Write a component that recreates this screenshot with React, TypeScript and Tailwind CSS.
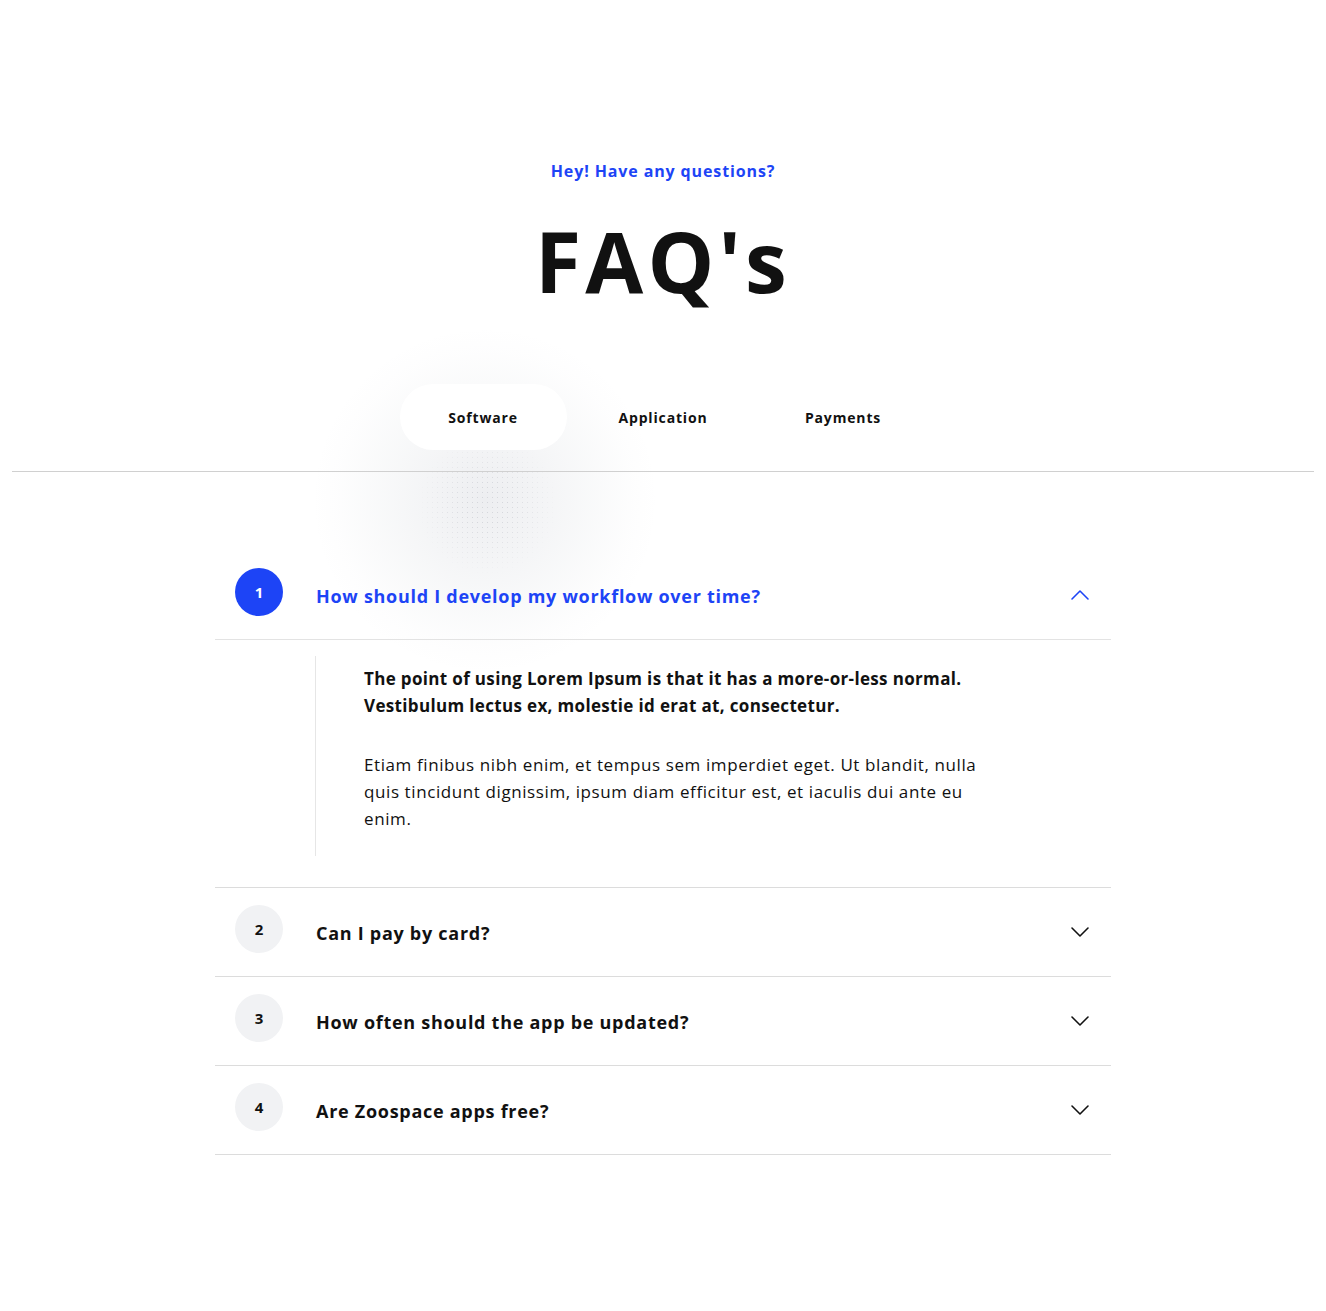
import { useState } from 'react';

type Faq = { q: string };

const TABS = ['Software', 'Application', 'Payments'];

const FAQS: Faq[] = [
  { q: 'How should I develop my workflow over time?' },
  { q: 'Can I pay by card?' },
  { q: 'How often should the app be updated?' },
  { q: 'Are Zoospace apps free?' },
];

function Chevron({ up }: { up: boolean }) {
  return (
    <svg width="20" height="12" viewBox="0 0 20 12" fill="none" className="mt-[6px] shrink-0">
      <path
        d={up ? 'M2 10 L10 2 L18 10' : 'M2 2 L10 10 L18 2'}
        stroke="currentColor"
        strokeWidth="1.6"
        strokeLinecap="round"
        strokeLinejoin="round"
      />
    </svg>
  );
}

export default function App() {
  const [tab, setTab] = useState('Software');
  const [open, setOpen] = useState<number | null>(0);

  return (
    <div className="relative min-h-[1311px] overflow-hidden bg-white px-3 font-['Open_Sans',sans-serif] text-[#111]">
      {/* soft glow behind the tabs */}
      <div className="pointer-events-none absolute left-[315px] top-[330px] h-[340px] w-[340px] rounded-full bg-[radial-gradient(circle,rgba(236,237,240,0.95)_0,rgba(240,241,243,0.8)_22%,rgba(245,246,247,0.6)_45%,rgba(250,250,251,0.3)_62%,transparent_72%)]" />
      <div className="pointer-events-none absolute left-[415px] top-[435px] h-[140px] w-[145px] rounded-full bg-[radial-gradient(#d5d7dc_0.7px,transparent_1px)] bg-[length:5px_5px] [mask-image:radial-gradient(circle,black_20%,transparent_70%)]" />

      <div className="relative flex flex-col items-center pt-[159px]">
        <p className="text-[16px] font-bold tracking-[0.055em] text-[#1d44f6]">Hey! Have any questions?</p>
        <h1 className="mt-[36px] text-[84px] font-bold leading-none tracking-[0.05em] text-[#111]">FAQ's</h1>

        <div className="mt-[81px] flex gap-[13px]">
          {TABS.map((t) => (
            <button
              key={t}
              type="button"
              onClick={() => setTab(t)}
              className={`h-[66px] w-[167px] rounded-[33px] text-[14px] font-bold tracking-[0.06em] text-[#111] ${
                tab === t ? 'bg-white' : 'bg-transparent'
              }`}
            >
              {t}
            </button>
          ))}
        </div>
      </div>

      <div className="relative mt-[21px] border-t border-[#d0d0d0]" />

      <div className="relative mx-auto mt-[79px] w-[896px]">
        {FAQS.map((f, i) => {
          const isOpen = open === i;
          return (
            <div key={f.q} className="border-b border-[#dcdcdc]">
              <button
                type="button"
                onClick={() => setOpen(isOpen ? null : i)}
                className={`flex w-full items-center pb-[23px] pl-5 pr-[21px] pt-[17px] text-left ${
                  isOpen ? 'border-b border-[#e3e3e3] text-[#1d44f6]' : 'text-[#111]'
                }`}
              >
                <span
                  className={`flex h-12 w-12 shrink-0 items-center justify-center rounded-full text-[15px] font-bold ${
                    isOpen ? 'bg-[#1d44f6] text-white' : 'bg-[#f1f2f4] text-[#111]'
                  }`}
                >
                  {i + 1}
                </span>
                <span className="ml-[33px] mt-2 flex-1 text-[18px] font-bold tracking-[0.04em]">{f.q}</span>
                <Chevron up={isOpen} />
              </button>
              {isOpen && (
                <div className="pb-[31px] pl-[100px] pt-4">
                  <div className="border-l border-[#e6e6e6] pb-6 pl-12 pt-[9px] text-[17px] leading-[27px] tracking-[0.035em] text-[#111]">
                    <p className="font-bold tracking-[0.02em]">
                      The point of using Lorem Ipsum is that it has a more-or-less normal.
                      <br />
                      Vestibulum lectus ex, molestie id erat at, consectetur.
                    </p>
                    <p className="mt-8">
                      Etiam finibus nibh enim, et tempus sem imperdiet eget. Ut blandit, nulla
                      <br />
                      quis tincidunt dignissim, ipsum diam efficitur est, et iaculis dui ante eu
                      <br />
                      enim.
                    </p>
                  </div>
                </div>
              )}
            </div>
          );
        })}
      </div>
    </div>
  );
}
